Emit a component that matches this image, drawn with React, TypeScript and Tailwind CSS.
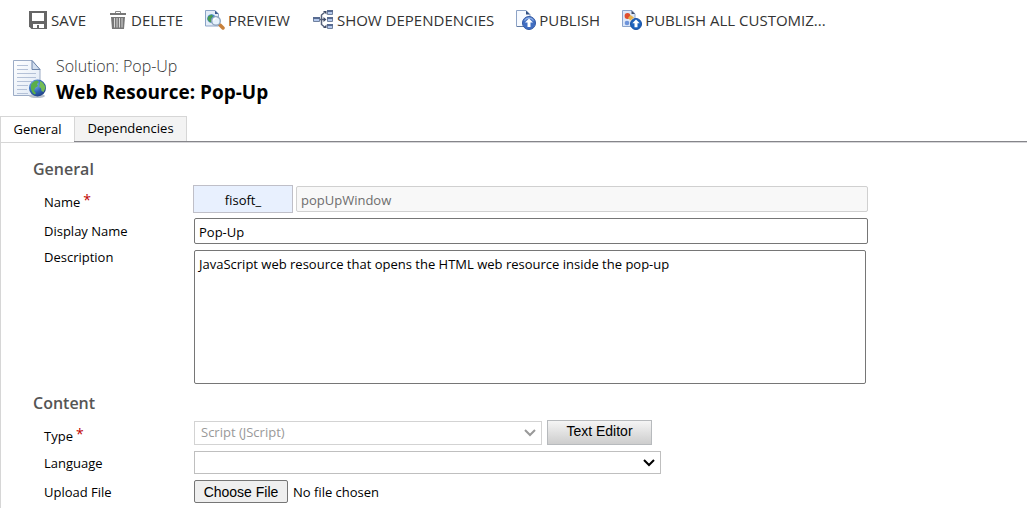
import React from "react";

function SaveIcon() {
  return (
    <svg width="20" height="20" viewBox="0 0 20 20" fill="none" className="shrink-0">
      <path d="M1 1h18v18H3.500L1 16.500z" fill="#666" />
      <path d="M4 3h12v8H4z" fill="#fff" />
      <path d="M5 14h11v4h-5v-3H9v3H5z" fill="#fff" />
    </svg>
  );
}

function TrashIcon() {
  return (
    <svg width="20" height="20" viewBox="0 0 20 20" fill="none" className="shrink-0">
      <path d="M7.500 3V1.500h5V3" stroke="#888" />
      <path d="M2 4h16" stroke="#777" strokeWidth="2" />
      <path d="M3 7h14l-1 12H4z" fill="#777" />
      <path d="M6.500 8v9.500M9 8v9.500M11.500 8v9.500M14 8v9.500" stroke="#d8d8d8" />
    </svg>
  );
}

function PreviewIcon() {
  return (
    <svg width="20" height="20" viewBox="0 0 20 20" fill="none" className="shrink-0">
      <path d="M.5.5h9.500l3.500 3.500v12H.5z" fill="#e3ecf8" stroke="#8ba3c7" />
      <path d="M10 .5V4h3.500z" fill="#39598f" />
      <circle cx="6.500" cy="8.500" r="4.300" fill="#4488c8" />
      <path d="M3 6.500l4-2 1 2-2 2 1 3-2 1-2.500-3z" fill="#4a9b52" />
      <path d="M15 15l3 3" stroke="#c8803a" strokeWidth="3.500" strokeLinecap="round" />
      <circle cx="11" cy="11" r="4.300" fill="#e6f2fc" stroke="#8fa5bf" strokeWidth="1.400" />
      <path d="M8.500 10.500a3 3 0 0 1 3-2.500" stroke="#fff" strokeWidth="1.500" />
    </svg>
  );
}

function DependenciesIcon() {
  return (
    <svg width="22" height="20" viewBox="0 0 22 20" fill="none" className="shrink-0">
      <path d="M8 9.500h5M9.500 9.500V5l3-2.500M9.500 9.500v5l3 2.500" stroke="#56617a" strokeWidth="1.500" />
      <path d="M11 1h3.500v3.500zM11.500 7l3 2.500-3 2.500zM14.500 14.500V18H11z" fill="#3f4b66" />
      <path d="M1.500 7.500h6v4h-6zM15.500.5h5v4h-5zM15.500 7.500h5v4h-5zM15.500 14.500h5v4h-5z" fill="#b4c8ec" stroke="#71829f" />
      <path d="M1 8h7M15 1h6M15 8h6M15 15h6" stroke="#586b91" strokeWidth="2" />
    </svg>
  );
}

function PublishIcon() {
  return (
    <svg width="20" height="20" viewBox="0 0 20 20" fill="none" className="shrink-0">
      <path d="M.5.5h9.500l4 4v12H.5z" fill="#f7faff" stroke="#8da3c6" />
      <path d="M10 .5v4h4z" fill="#304f82" />
      <path d="M1 16.500h8" stroke="#647ca3" />
      <circle cx="13" cy="13" r="6.500" fill="#416ec2" stroke="#3157a3" />
      <path d="M8.500 10.500a5.300 5.300 0 0 1 9 0" stroke="#8caee5" strokeWidth="1.300" />
      <path d="M13 8.500l4 4h-2.500V17h-3v-4.500H9z" fill="#fff" />
    </svg>
  );
}

function PublishAllIcon() {
  return (
    <svg width="20" height="20" viewBox="0 0 20 20" fill="none" className="shrink-0">
      <path d="M.5.5H10L13 4v12.500H.5z" fill="#dce7f8" stroke="#8ba4cc" />
      <path d="M9.500.5V4H13z" fill="#3f4c68" />
      <circle cx="5.500" cy="6" r="2.900" fill="#df4e2e" />
      <path d="M8.500 5l3.500 2.500-3.500 3L6 8z" fill="#e7b44d" />
      <circle cx="5" cy="13" r="2.300" fill="#6e94da" />
      <circle cx="14" cy="14" r="5.500" fill="#1d63bd" stroke="#1b50a0" />
      <path d="M14 9.500l3.700 3.800h-2.200v4h-3v-4h-2.200z" fill="#fff" />
    </svg>
  );
}

function WebResourceIcon() {
  return (
    <svg width="36" height="42" viewBox="0 0 36 42" fill="none" className="shrink-0">
      <defs>
        <linearGradient id="paper" x1="0" y1="0" x2="1" y2="1">
          <stop offset="0" stopColor="#fff" />
          <stop offset="1" stopColor="#dde7f4" />
        </linearGradient>
        <radialGradient id="globe" cx=".35" cy=".3" r=".8">
          <stop offset="0" stopColor="#8bbcf0" />
          <stop offset=".55" stopColor="#2f65b5" />
          <stop offset="1" stopColor="#1c397b" />
        </radialGradient>
      </defs>
      <path d="M1.500 2.500H20l8 9v26H1.500z" fill="url(#paper)" stroke="#9cacc6" />
      <path d="M20 2.500v9h8z" fill="#d3dfef" stroke="#6e86ab" />
      <path d="M5 7.500h11M5 11.500h11M5 15.500h19M5 19.500h19M5 23.500h15M5 27.500h11M5 31.500h10M5 35.500h11" stroke="#b4c1d7" />
      <ellipse cx="25" cy="38" rx="8" ry="2" fill="#b9c1cc" />
      <circle cx="25.500" cy="30" r="8.500" fill="url(#globe)" />
      <path d="M19 27c1-3 4-4.500 6-4.500l2 1.500-2 2 1 2-3 2-1 3 2 2-1 1.500c-3-1-4.500-5-4-9.500z" fill="#5aae48" />
      <path d="M28 23c3 1 5 4 5.500 7l-2 4-2-1-.5-3-2-1 1-3z" fill="#74bd54" />
    </svg>
  );
}

function Chevron({ className }: any) {
  return (
    <svg width="12" height="8" viewBox="0 0 12 8" fill="none" className={className}>
      <path d="M1 1l5 5 5-5" stroke="currentColor" strokeWidth="2" />
    </svg>
  );
}

const actions = [
  { label: "SAVE", icon: <SaveIcon /> },
  { label: "DELETE", icon: <TrashIcon /> },
  { label: "PREVIEW", icon: <PreviewIcon /> },
  { label: "SHOW DEPENDENCIES", icon: <DependenciesIcon /> },
  { label: "PUBLISH", icon: <PublishIcon /> },
  { label: "PUBLISH ALL CUSTOMIZ...", icon: <PublishAllIcon /> },
];

function Field({ id, label, required, top, children }: any) {
  return (
    <div className={top ? "flex items-start" : "flex items-center"}>
      <label htmlFor={id} className={required ? "w-[149px] shrink-0 pt-1.5 leading-4" : "w-[149px] shrink-0 leading-4"}>
        {label}
        {required && <span className="ml-[3px] align-top text-sm leading-3 text-[#c00000]">*</span>}
      </label>
      <div className="flex min-w-0 flex-1 items-center">{children}</div>
    </div>
  );
}

export default function App() {
  return (
    <div className="flex min-h-screen flex-col bg-white font-['Segoe_UI','Open_Sans',sans-serif] text-[13px] text-black">
      <nav className="flex h-10 items-center gap-[22px] pl-7 text-[15px] text-[#333]">
        {actions.map((action) => (
          <button key={action.label} type="button" className="flex items-center gap-[3px] whitespace-nowrap">
            {action.icon}
            {action.label}
          </button>
        ))}
      </nav>

      <header className="flex h-[76px] items-start gap-2 pt-[18px] pl-3">
        <WebResourceIcon />
        <div>
          <p className="text-base leading-4 font-light text-[#333]">Solution: Pop-Up</p>
          <h1 className="mt-1 text-[19px] leading-7 font-bold">Web Resource: Pop-Up</h1>
        </div>
      </header>

      <div role="tablist" className="flex items-stretch">
        <button role="tab" aria-selected="true" type="button" className="h-[27px] w-[74px] border border-r-0 border-[#d6d6d6] bg-white">
          General
        </button>
        <div className="flex flex-1 border-b border-[#d6d6d9]">
          <div className="flex flex-1 border-b border-[#85858a]">
            <button role="tab" aria-selected="false" type="button" className="w-[113px] border border-b-0 border-[#d6d6d6] bg-[#f3f3f3]">
              Dependencies
            </button>
          </div>
        </div>
      </div>

      <main className="flex-1 border-l border-[#d6d6d6] pt-3 pl-8">
        <section>
          <h2 className="text-base leading-7 font-semibold text-[#555]">General</h2>
          <div className="mt-[2px] flex max-w-[835px] flex-col gap-[5px] pl-[11px]">
            <Field id="name" label="Name" required>
              <input
                aria-label="Prefix"
                defaultValue="fisoft_"
                className="mr-[3px] h-7 w-[100px] border border-[#bfbfc8] bg-[#e8f0fe] pt-0.5 text-center"
              />
              <input
                id="name"
                disabled
                defaultValue="popUpWindow"
                className="h-[26px] min-w-0 flex-1 rounded-xs border border-[#d0d0d0] bg-[#f8f8f8] px-1 pt-0.5 text-[#6d6d6d]"
              />
            </Field>
            <Field id="display" label="Display Name">
              <input id="display" defaultValue="Pop-Up" className="ml-px h-[26px] min-w-0 flex-1 rounded-xs border border-[#767676] px-1 pt-0.5" />
            </Field>
            <Field id="description" label="Description" top>
              <textarea
                id="description"
                defaultValue="JavaScript web resource that opens the HTML web resource inside the pop-up"
                className="mt-px mr-[2px] ml-px h-[134px] min-w-0 flex-1 resize-none rounded-xs border border-[#767676] px-1 py-[3px] leading-5"
              />
            </Field>
          </div>
        </section>

        <section className="mt-[5px]">
          <h2 className="text-base leading-7 font-semibold text-[#555]">Content</h2>
          <div className="mt-[3px] flex max-w-[835px] flex-col gap-[6px] pl-[11px]">
            <Field id="type" label="Type" required>
              <div className="relative ml-px w-[348px]">
                <select id="type" disabled className="block h-6 w-full appearance-none border border-[#d3d3d3] bg-white px-[6px] text-[#999]">
                  <option>Script (JScript)</option>
                </select>
                <Chevron className="pointer-events-none absolute top-2 right-1.5 text-[#999]" />
              </div>
              <button
                type="button"
                className="ml-[5px] h-[25px] w-[105px] border border-[#b7babd] bg-linear-to-b from-[#f5f5f5] to-[#cdcdcd] pb-1 font-['Liberation_Sans',Arial,sans-serif] text-sm leading-5"
              >
                Text Editor
              </button>
            </Field>
            <Field id="language" label="Language">
              <div className="relative ml-px w-[467px]">
                <select id="language" className="block h-[23px] w-full appearance-none border border-[#bfbfbf] bg-white px-[6px]">
                  <option></option>
                </select>
                <Chevron className="pointer-events-none absolute top-2 right-1.5 text-black" />
              </div>
            </Field>
            <Field id="upload" label="Upload File">
              <input
                id="upload"
                type="file"
                className="ml-px h-[23px] w-[467px] file:mr-[5px] file:h-[23px] file:w-[94px] file:rounded-xs file:border file:border-solid file:border-[#767676] file:bg-[#efefef] file:font-['Liberation_Sans',Arial,sans-serif] file:text-sm file:leading-5 file:text-black"
              />
            </Field>
          </div>
        </section>
      </main>
    </div>
  );
}
